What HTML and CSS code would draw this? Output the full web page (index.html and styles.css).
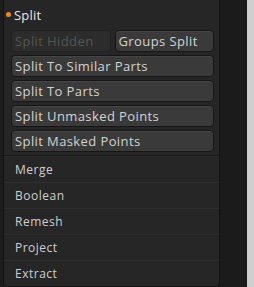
FILE: index.html
```html
<!DOCTYPE html>
<html>
<head>
<meta charset="utf-8">
<link rel="stylesheet" href="styles.css">
</head>
<body>
<div class="frame">
  <div class="panel">
    <div class="header"><span class="dot"></span>Split</div>
    <div class="buttons">
      <div class="row2">
        <div class="btn disabled">Split Hidden</div>
        <div class="btn">Groups Split</div>
      </div>
      <div class="btn">Split To Similar Parts</div>
      <div class="btn">Split To Parts</div>
      <div class="btn">Split Unmasked Points</div>
      <div class="btn">Split Masked Points</div>
    </div>
    <div class="sections">
      <div class="section">Merge</div>
      <div class="section">Boolean</div>
      <div class="section">Remesh</div>
      <div class="section">Project</div>
      <div class="section">Extract</div>
    </div>
  </div>
  <div class="gutter"></div>
  <div class="edge"></div>
</div>
</body>
</html>
```
FILE: styles.css
```css
html, body {
  margin: 0;
  padding: 0;
  background: #1d1d1d;
  width: 254px;
  height: 287px;
  overflow: hidden;
}
.frame {
  display: flex;
  height: 287px;
  padding-left: 3px;
  box-sizing: border-box;
  font-family: "Open Sans", "DejaVu Sans", sans-serif;
}
.panel {
  width: 217px;
  box-sizing: border-box;
  background: #262626;
  border-left: 1px solid #121212;
  border-right: 1px solid #121212;
  border-bottom: 1px solid #121212;
  border-radius: 0 0 4px 4px;
  display: flex;
  flex-direction: column;
}
.header {
  height: 31px;
  display: flex;
  align-items: center;
  padding-left: 2px;
  padding-bottom: 1px;
  box-sizing: border-box;
  color: #e6e6e6;
  font-size: 13px;
  letter-spacing: 0.2px;
}
.dot {
  width: 5px;
  height: 5px;
  border-radius: 50%;
  background: #f08a1c;
  margin-right: 3px;
}
.buttons {
  display: flex;
  flex-direction: column;
  gap: 3px;
  padding: 0 5px 0 7px;
}
.row2 {
  display: flex;
  gap: 4px;
}
.row2 .btn {
  flex: 1;
}
.btn {
  height: 22px;
  box-sizing: border-box;
  background: #3a3a3a;
  border: 1px solid #161616;
  box-shadow: inset 0 1px 0 #454545;
  border-radius: 4px;
  color: #d2d2d2;
  font-size: 13px;
  letter-spacing: 0.4px;
  display: flex;
  align-items: center;
  padding-left: 3px;
  white-space: nowrap;
  overflow: hidden;
}
.btn.disabled {
  background: #2c2c2c;
  color: #555;
  box-shadow: none;
  border-color: #222;
}
.sections {
  margin-top: 3px;
  border-top: 1px solid #181818;
  display: flex;
  flex-direction: column;
}
.section {
  height: 26px;
  box-sizing: border-box;
  border-top: 1px solid #2e2e2e;
  display: flex;
  align-items: center;
  padding-left: 11px;
  color: #cfcfcf;
  font-size: 12px;
  letter-spacing: 0.5px;
}
.gutter {
  width: 27px;
  background: #1b1b1b;
}
.edge {
  flex: 1;
  background: #cfcfcf;
}
```
